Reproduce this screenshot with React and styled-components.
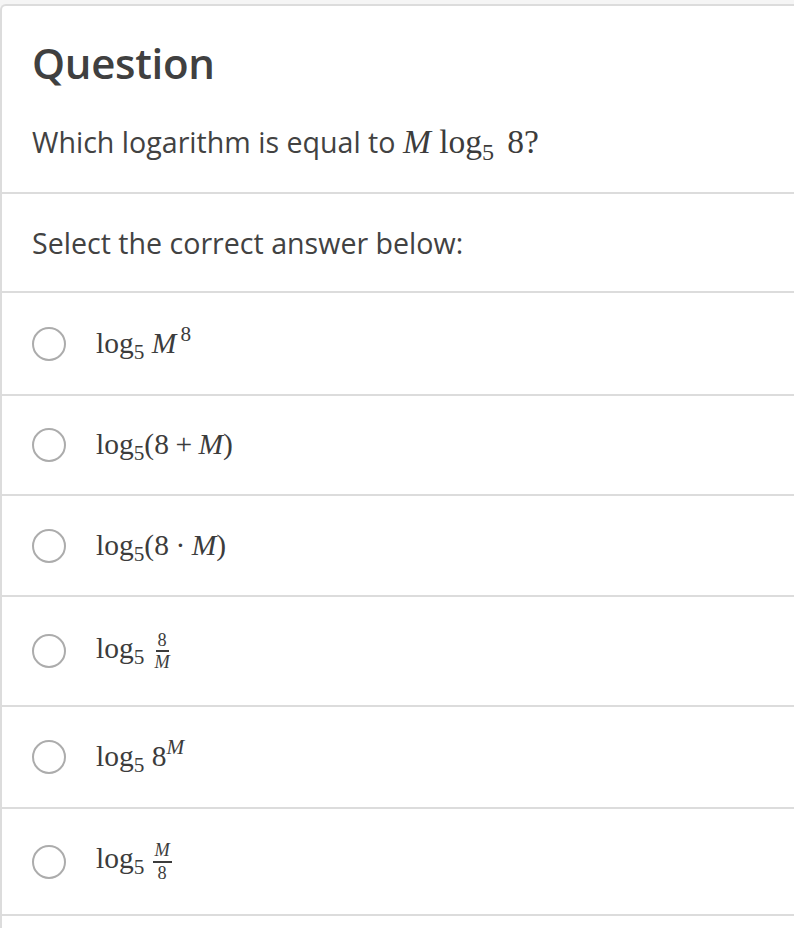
import styled, { createGlobalStyle } from "styled-components";

const GlobalStyle = createGlobalStyle`
  html, body {
    margin: 0;
    padding: 0;
    background: #f5f5f5;
  }
  body {
    font-family: "Open Sans", "Liberation Sans", sans-serif;
    color: #424242;
  }
`;

const Page = styled.div`
  padding-top: 4px;
  width: 794px;
  height: 928px;
  overflow: hidden;
`;

const Card = styled.div`
  background: #fff;
  border: 2px solid #dcdcdc;
  border-right: none;
  border-radius: 6px 0 0 0;
  min-height: 1000px;
`;

const Section = styled.div`
  border-bottom: 2px solid #dcdcdc;
  padding: 0 30px;
  height: ${({ $h }) => $h}px;
  box-sizing: border-box;
  display: flex;
  flex-direction: column;
  justify-content: center;
`;

const Title = styled.h1`
  margin: 0 0 34px;
  font-size: 42px;
  font-weight: 600;
  color: #404040;
  letter-spacing: -0.3px;
  line-height: 1.2;
`;

const Prompt = styled.p`
  margin: 0;
  font-size: 28.6px;
  color: #424242;
  line-height: 1.3;
`;

const Option = styled.label`
  display: flex;
  align-items: center;
  gap: 30px;
  padding: 0 30px;
  height: ${({ $h }) => $h}px;
  border-bottom: 2px solid #dcdcdc;
  box-sizing: border-box;
  cursor: pointer;
`;

const Radio = styled.span`
  width: 30px;
  height: 30px;
  border: 2px solid #acacac;
  border-radius: 50%;
  flex: none;
`;

const Math = styled.span`
  font-family: "Liberation Serif", "DejaVu Serif", serif;
  font-size: ${({ $size }) => $size || 29.5}px;
  color: #3c3c3c;
  white-space: nowrap;
  line-height: 1;
`;

const Var = styled.i`
  font-style: italic;
`;

const Op = styled.span`
  margin: 0 0.22em;
`;

const Sub = styled.span`
  font-size: 0.72em;
  vertical-align: -0.3em;
  line-height: 0;
  margin-right: ${({ $gap }) => $gap || 0}em;
`;

const Sup = styled.span`
  font-size: 0.72em;
  vertical-align: 0.55em;
  line-height: 0;
`;

const Frac = styled.span`
  display: inline-flex;
  flex-direction: column;
  align-items: center;
  font-family: "Liberation Serif", "DejaVu Serif", serif;
  font-size: 0.62em;
  line-height: 1;
  margin-left: 0.45em;
  vertical-align: middle;
`;

const Num = styled.span`
  padding: 0 2px 1px;
  border-bottom: 2px solid #3c3c3c;
`;

const Den = styled.span`
  padding: 1px 2px 0;
`;

const Log = ({ gap }) => (
  <>
    log<Sub $gap={gap}>5</Sub>
  </>
);

const options = [
  {
    h: 103,
    el: (
      <>
        <Log /> <Var>M</Var>
        <Sup>&thinsp;8</Sup>
      </>
    ),
  },
  {
    h: 100,
    el: (
      <>
        <Log />(8<Op>+</Op><Var>M</Var>)
      </>
    ),
  },
  {
    h: 101,
    el: (
      <>
        <Log />(8<Op>·</Op><Var>M</Var>)
      </>
    ),
  },
  {
    h: 110,
    el: (
      <>
        <Log />
        <Frac>
          <Num>8</Num>
          <Den>
            <Var>M</Var>
          </Den>
        </Frac>
      </>
    ),
  },
  {
    h: 102,
    el: (
      <>
        <Log /> 8
        <Sup>
          <Var>M</Var>
        </Sup>
      </>
    ),
  },
  {
    h: 107,
    el: (
      <>
        <Log />
        <Frac>
          <Num>
            <Var>M</Var>
          </Num>
          <Den>8</Den>
        </Frac>
      </>
    ),
  },
];

export default function App() {
  return (
    <Page>
      <GlobalStyle />
      <Card>
        <Section $h={188}>
          <Title>Question</Title>
          <Prompt>
            Which logarithm is equal to{" "}
            <Math $size={33.5}>
              <Var>M</Var> <Log gap={0.2} /> 8?
            </Math>
          </Prompt>
        </Section>
        <Section $h={99}>
          <Prompt>Select the correct answer below:</Prompt>
        </Section>
        {options.map((o, i) => (
          <Option key={i} $h={o.h}>
            <Radio />
            <Math>{o.el}</Math>
          </Option>
        ))}
      </Card>
    </Page>
  );
}
